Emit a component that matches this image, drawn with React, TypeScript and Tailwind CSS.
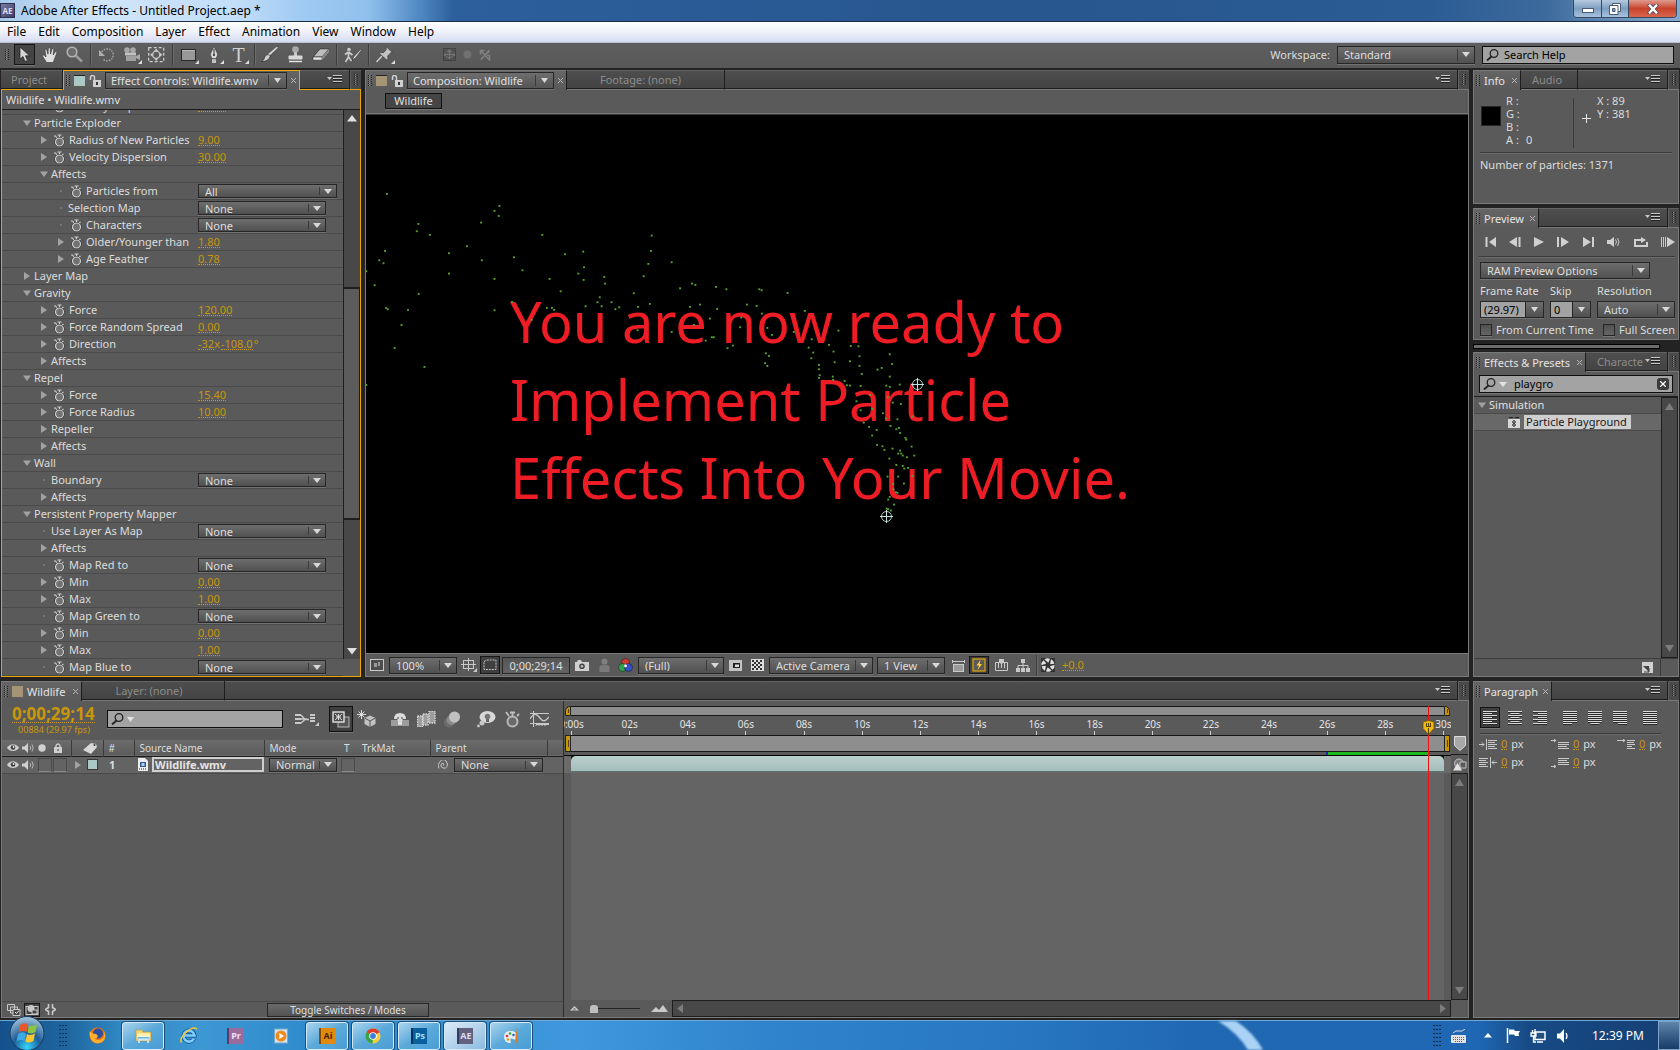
import React from "react";
import clsx from "clsx";

type Kids = { children?: React.ReactNode; className?: string };

/* ---------- drawing helpers ---------- */

function Ico({ w, h, className, children }: { w: number; h: number } & Kids) {
  return (
    <svg width={w} height={h} viewBox={`0 0 ${w} ${h}`} className={clsx("shrink-0", className)} aria-hidden="true">
      {children}
    </svg>
  );
}

const L = "#c9c9c9";

function Grip() {
  return (
    <Ico w={4} h={11}>
      {[0, 2, 4, 6, 8, 10].map((y) => (
        <g key={y} fill="#222">
          <rect x="0" y={y} width="1" height="1" />
          <rect x="3" y={y} width="1" height="1" />
          <rect x="1" y={y} width="1" height="1" fill="#8a8a8a" />
        </g>
      ))}
    </Ico>
  );
}

function Close() {
  return (
    <button aria-label="Close tab" className="flex">
      <Ico w={5} h={5}>
        <path d="M0 0L5 5M5 0L0 5" stroke="#b5b5b5" strokeWidth="1" />
      </Ico>
    </button>
  );
}

function MenuIcon() {
  return (
    <button aria-label="Panel menu" className="flex">
      <Ico w={15} h={9}>
        <path d="M0 2h5L2.5 5z" fill={L} />
        <path d="M6 .5h9M6 3.5h9M6 6.5h9" stroke={L} />
        <path d="M6 1.5h9M6 4.5h9M6 7.5h9" stroke="#222" />
      </Ico>
    </button>
  );
}

function Lock() {
  return (
    <Ico w={12} h={12}>
      <path d="M1.5 5V2.5a2 2 0 0 1 4 0V5" fill="none" stroke="#d0d0d0" strokeWidth="1.5" />
      <rect x="4" y="5" width="8" height="7" fill="#d0d0d0" />
      <rect x="7" y="7" width="2" height="3" fill="#333" />
    </Ico>
  );
}

function Down({ w = 8, fill = "#d8d8d8" }: { w?: number; fill?: string }) {
  return (
    <Ico w={w} h={5}>
      <path d={`M0 0h${w}L${w / 2} 5z`} fill={fill} />
    </Ico>
  );
}

function Loupe({ dark = "#222" }: { dark?: string }) {
  return (
    <Ico w={13} h={12}>
      <circle cx="8" cy="4.5" r="3.8" fill="none" stroke={dark} strokeWidth="1.3" />
      <path d="M5.5 7.5L1 11.5" stroke={dark} strokeWidth="1.8" />
    </Ico>
  );
}

/* ---------- controls ---------- */

function Sel({ value, label, className, pad = "pl-[6px]" }: { value: string; label: string; className?: string; pad?: string }) {
  return (
    <div className={clsx("relative shrink-0", className)}>
      <select
        aria-label={label}
        defaultValue={value}
        className={clsx(
          "block h-full w-full appearance-none border border-[#262626] bg-linear-to-b from-[#6e6e6e] to-[#505050] pr-4 text-[11px] leading-none text-[#dedede] shadow-[0_1px_0_#727272]",
          pad,
        )}
      >
        <option>{value}</option>
      </select>
      <span className="pointer-events-none absolute inset-y-0 right-0 flex w-[18px] items-center justify-center">
        <span className="absolute inset-y-[3px] left-0 w-px bg-[#3a3a3a]" />
        <Down />
      </span>
    </div>
  );
}

function Panel({
  tabs,
  children,
  accent,
  className,
  extra,
}: {
  tabs: React.ReactNode;
  accent?: boolean;
  extra?: React.ReactNode;
} & Kids) {
  const line = accent ? "border-[#eba500]" : "border-[#7a7a7a]";
  return (
    <section className={clsx("flex min-w-0 flex-col", className)}>
      <div className="flex h-[20px] shrink-0">
        {tabs}
        <div className={clsx("flex min-w-0 flex-1 items-center justify-end border-b bg-linear-to-b from-[#4e4e4e] to-[#434343] pr-[7px] shadow-[inset_0_-1px_0_#1d1d1d,inset_0_1px_0_#646464]", line)}>
          {extra}
          <MenuIcon />
        </div>
        <div className={clsx("flex w-[12px] shrink-0 items-center justify-center border-b border-l bg-[#4a4a4a] shadow-[inset_1px_1px_0_#606060]", line, "border-l-[#1d1d1d]")}>
          <Grip />
        </div>
      </div>
      <div className={clsx("flex min-h-0 flex-1 flex-col border-x border-b bg-[#5a5a5a]", line)}>{children}</div>
    </section>
  );
}

function ActiveTab({ children, accent, className }: { accent?: boolean } & Kids) {
  return (
    <div
      className={clsx(
        "flex shrink-0 items-center border-t border-l border-r bg-linear-to-b from-[#656565] to-[#5a5a5a]",
        accent ? "border-[#eba500]" : "border-[#7a7a7a] border-r-[#1d1d1d]",
        className,
      )}
    >
      {children}
    </div>
  );
}

function IdleTab({ children, accent, className }: { accent?: boolean } & Kids) {
  return (
    <button
      className={clsx(
        "flex shrink-0 items-center justify-center overflow-hidden border-r border-b border-r-[#1d1d1d] bg-linear-to-b from-[#4e4e4e] to-[#434343] text-[#8c8c8c] shadow-[inset_0_-1px_0_#1d1d1d,inset_0_1px_0_#646464]",
        accent ? "border-b-[#eba500]" : "border-b-[#7a7a7a]",
        className,
      )}
    >
      {children}
    </button>
  );
}

function TabMenu({ children, className }: Kids) {
  return (
    <button className={clsx("flex h-[17px] items-center border border-[#262626] bg-linear-to-b from-[#6e6e6e] to-[#555] pl-[5px] whitespace-nowrap text-[#e0e0e0] shadow-[0_1px_0_#727272]", className)}>
      <span className="flex-1 text-left">{children}</span>
      <span className="flex h-[11px] w-[18px] items-center justify-center border-l border-[#3a3a3a]">
        <Down w={7} />
      </span>
    </button>
  );
}

/* ---------- title, menu and tool bars ---------- */

function TitleBar() {
  return (
    <header className="flex h-[22px] shrink-0 items-start justify-between border-b border-[#1c2e45] bg-[linear-gradient(90deg,#a6c9ea_0%,#cfe4f8_6%,#c2def8_14%,#9fcaf2_18%,#8fc0ec_22%,#4f88c2_25%,#2c5f9c_27%,#28568e_60%,#2b5c94_85%,#3d6a9d_92%,#84a9cc_100%)]">
      <div className="flex h-full items-center">
        <span className="flex h-[15px] w-[15px] items-center justify-center border border-[#2f2f52] bg-linear-to-br from-[#7a7aa5] to-[#3f3f63] text-[8px] font-bold text-[#dcdcf2]">AE</span>
        <h1 className="pl-[6px] text-[12px] text-black">Adobe After Effects - Untitled Project.aep *</h1>
      </div>
      <div className="mr-[3px] flex h-[18px] overflow-hidden rounded-b-[4px] border border-t-0 border-[#33465e] shadow-[0_0_1px_#dbe8f5]">
        <button aria-label="Minimize" className="flex w-[28px] items-center justify-center border-r border-[#33465e] bg-linear-to-b from-[#b4c9df] via-[#7f9fc1] to-[#a6c2de]">
          <Ico w={12} h={10}><rect x=".5" y="4.5" width="11" height="4" fill="#fff" stroke="#4a5a70" /></Ico>
        </button>
        <button aria-label="Restore" className="flex w-[27px] items-center justify-center border-r border-[#33465e] bg-linear-to-b from-[#b4c9df] via-[#7f9fc1] to-[#a6c2de]">
          <Ico w={12} h={12}>
            <path d="M3.5.5h8v8h-8z" fill="#fff" stroke="#4a5a70" />
            <path d="M.5 2.5h8.5v9H.5z" fill="#fff" stroke="#4a5a70" />
            <path d="M3.5 5.5h2.5v3H3.5z" fill="#8aa7c6" stroke="#4a5a70" />
          </Ico>
        </button>
        <button aria-label="Close" className="flex w-[47px] items-center justify-center bg-linear-to-b from-[#dd9a8e] via-[#c8412b] to-[#d9664e]">
          <Ico w={12} h={10}>
            <path d="M1.5 0L10.5 10M10.5 0L1.5 10" stroke="#4c4c60" strokeWidth="4" />
            <path d="M2 .7L10 9.3M10 .7L2 9.3" stroke="#fff" strokeWidth="2.4" />
          </Ico>
        </button>
      </div>
    </header>
  );
}

function MenuBar() {
  return (
    <nav className="flex h-[21px] shrink-0 items-center gap-3 border-b border-[#b8bfd6] bg-linear-to-b from-white via-[#eef1fa] to-[#d6dcf0] pl-[7px] text-[12px] text-black">
      {["File", "Edit", "Composition", "Layer", "Effect", "Animation", "View", "Window", "Help"].map((m) => (
        <button key={m}>{m}</button>
      ))}
    </nav>
  );
}

function Tool({ label, on, children, more }: { label: string; on?: boolean; more?: boolean; children: React.ReactNode }) {
  return (
    <button
      aria-label={label}
      className={clsx(
        "relative flex h-[21px] items-center justify-center",
        on ? "mx-[2px] w-[21px] border border-[#161616] bg-[#444] shadow-[0_1px_0_#777]" : "w-[25px]",
      )}
    >
      {children}
      {more && (
        <svg width="4" height="4" className="absolute right-[2px] bottom-px"><path d="M4 0V4H0z" fill="#ddd" /></svg>
      )}
    </button>
  );
}

const Rule = () => <span className="mx-[3px] h-[21px] w-px bg-[#3c3c3c] shadow-[1px_0_0_#6c6c6c]" />;

function ToolBar() {
  return (
    <div className="flex h-[25px] shrink-0 items-center bg-linear-to-b from-[#5e5e5e] to-[#585858] pr-[6px] pb-[2px] pl-[5px]">
      <Grip />
      <span className="w-[3px]" />
      <Tool label="Selection" on>
        <Ico w={11} h={15}><path d="M1 0V12L4 9.5L6 14.5L8.5 13.5L6.5 8.8H10.5z" fill="#d5d5d5" stroke="#1d1d1d" strokeWidth=".7" /></Ico>
      </Tool>
      <Tool label="Hand">
        <Ico w={16} h={16}>
          <path d="M4.5 15.5L.8 9.5c-.7-1.3 1-2 1.8-1L4 10 3 3.5c-.2-1.5 1.5-1.6 1.9-.3L6 7.2 6.3 1.7c.1-1.4 1.9-1.4 2 0L8.6 7 9.9 2.3c.4-1.3 2-.9 1.9.4L11.2 8l1.9-3c.7-1 2.1-.3 1.7.9l-2.7 7.1-.8 2.5z" fill="#dedede" stroke="#333" strokeWidth=".6" />
        </Ico>
      </Tool>
      <Tool label="Zoom">
        <Ico w={17} h={17}>
          <path d="M9 9L16 15.5" stroke="#9a9a9a" strokeWidth="2.6" />
          <circle cx="6" cy="6" r="4.8" fill="#6e6e6e" stroke="#b4b4b4" strokeWidth="1.6" />
        </Ico>
      </Tool>
      <Rule />
      <Tool label="Rotation">
        <Ico w={16} h={16}>
          <path d="M3 5a6 6 0 1 1 1.5 7.5" fill="none" stroke="#a5a5a5" strokeWidth="1.5" strokeDasharray="1.5 1.2" />
          <path d="M0 3v6h6z" fill="#b0b0b0" />
        </Ico>
      </Tool>
      <Tool label="Camera" more>
        <Ico w={18} h={15}>
          <circle cx="4" cy="3" r="2.8" fill="#a8a8a8" /><circle cx="10" cy="3" r="2.8" fill="#a8a8a8" />
          <rect x="2" y="5.5" width="11" height="3" fill="#c4c4c4" /><rect x="3" y="9" width="10" height="5" fill="#a0a0a0" />
          <path d="M13 9L17 7V13L13 11z" fill="#a8a8a8" />
        </Ico>
      </Tool>
      <Tool label="Pan Behind">
        <Ico w={17} h={16}>
          <path d="M.7 .7h15v14h-15z" fill="none" stroke={L} strokeWidth="1.3" strokeDasharray="3 2" />
          <circle cx="8.2" cy="7.7" r="3.6" fill="none" stroke={L} strokeWidth="1.3" />
          <path d="M8.2 1.5l2 2.5h-4zM8.2 14l2-2.5h-4zM2 7.7l2.500-2v4zM14.5 7.7l-2.5-2v4z" fill={L} />
        </Ico>
      </Tool>
      <Rule />
      <Tool label="Rectangle" more>
        <Ico w={15} h={12}><rect x=".5" y=".5" width="14" height="11" fill="#989898" stroke="#262626" /><path d="M1 1.5h13" stroke="#bbb" /></Ico>
      </Tool>
      <Tool label="Pen" more>
        <Ico w={12} h={17}>
          <path d="M6 0C7 4 9.5 6 9.5 9L8 12.5H4L2.5 9C2.5 6 5 4 6 0z" fill="#d8d8d8" stroke="#333" strokeWidth=".5" />
          <path d="M6 3V8.5" stroke="#333" /><circle cx="6" cy="9" r="1.1" fill="#333" /><path d="M4 13.2h4V17H4z" fill="#c4c4c4" />
        </Ico>
      </Tool>
      <Tool label="Type" more>
        <span className="font-['Liberation_Serif',serif] text-[20px] leading-none text-[#d0d0d0]">T</span>
      </Tool>
      <Rule />
      <Tool label="Brush">
        <Ico w={17} h={16}>
          <path d="M16 .5L7 9l-1.3-1.5L14.5 0z" fill="#d8d8d8" /><path d="M6.5 7.8c1.5 0 2.3 1.8.8 3.5C5.5 13.5 3 14.5 0 14.5c2-1.5 2-3 3-5 .8-1.4 2-2 3.5-1.7z" fill="#cfcfcf" stroke="#222" strokeWidth=".6" />
        </Ico>
      </Tool>
      <Tool label="Clone Stamp">
        <Ico w={15} h={17}>
          <circle cx="7.5" cy="3.5" r="3.3" fill="#a8a8a8" /><path d="M6.3 6h2.4l.6 4H5.7z" fill="#c8c8c8" /><rect x=".5" y="9.5" width="14" height="4" rx="1" fill="#d8d8d8" /><path d="M1 15.5h13" stroke="#e2e2e2" strokeWidth="1.5" />
        </Ico>
      </Tool>
      <Tool label="Eraser">
        <Ico w={18} h={13}>
          <path d="M8 .8H17L10 9H1z" fill="#bdbdbd" stroke="#222" strokeWidth=".7" /><path d="M1 9H10V12.2H1z" fill="#e4e4e4" stroke="#333" strokeWidth=".6" /><path d="M10 9L17 .8V4L10 12.2z" fill="#8a8a8a" />
        </Ico>
      </Tool>
      <Rule />
      <Tool label="Roto Brush">
        <Ico w={18} h={16}>
          <circle cx="5" cy="2.5" r="1.8" fill={L} /><path d="M4.5 5L1 7.5M4.5 5l4 3M4.5 5v5l-3 5M4.5 10l3 4" stroke={L} strokeWidth="1.7" fill="none" />
          <path d="M17 2L10 9.5 8 13l3.5-2L17.5 3z" fill="#dedede" stroke="#222" strokeWidth=".5" />
        </Ico>
      </Tool>
      <Rule />
      <Tool label="Puppet Pin" more>
        <Ico w={17} h={17}>
          <path d="M.5 16L6 10" stroke="#cfcfcf" strokeWidth="1.4" />
          <path d="M10 .5L16.5 6.5l-1.8.3-3 3.2.3 3.3L10.8 14 3.5 7.5l.8-1 3.2.2 2.8-3.2z" fill="#c2c2c2" stroke="#333" strokeWidth=".6" />
        </Ico>
      </Tool>
      <div className="ml-[46px] flex items-center gap-[7px] opacity-60">
        <Ico w={13} h={13}><rect x=".5" y=".5" width="12" height="12" fill="#4c4c4c" stroke="#333" /><path d="M6.5 2v9M6.5 1.5L4.5 4h4zM3 6.5h7M2 6c1 5 8 5 9 0M1.5 8l.5-2.5L4 7M11.5 8L11 5.5 9 7" stroke="#8a8a8a" fill="none" /></Ico>
        <Ico w={9} h={9}><circle cx="4.5" cy="4.5" r="4" fill="#808080" /></Ico>
        <Ico w={12} h={12}><path d="M1 1.5h4.5M1.5 1v4.5M1.5 1.5l6 6M10.5 1L3 9.5M2 11l1.5-3M8 6.5h2.5V11L7 7.5M9.5 2v2" stroke="#999" strokeWidth="1.5" fill="none" /></Ico>
      </div>
      <div className="flex-1" />
      <span className="mr-[7px] text-[#dcdcdc]">Workspace:</span>
      <Sel value="Standard" label="Workspace" className="h-[18px] w-[138px]" />
      <label className="ml-[7px] flex h-[18px] w-[192px] items-center gap-[5px] border border-[#0e0e0e] bg-[#a3a3a3] px-[3px] shadow-[0_1px_0_#777]">
        <Loupe />
        <input aria-label="Search Help" defaultValue="Search Help" className="min-w-0 flex-1 bg-transparent text-[11px] text-black outline-none" />
      </label>
    </div>
  );
}

/* ---------- effect controls ---------- */

type Row = { d: 1 | 2 | 3; a: "open" | "shut" | "dot"; w?: boolean; t: string; v?: string; s?: string };

const ROWS: Row[] = [
  { d: 2, a: "shut", w: true, t: "Velocity Dispersion", v: "30.00" },
  { d: 1, a: "open", t: "Particle Exploder" },
  { d: 2, a: "shut", w: true, t: "Radius of New Particles", v: "9.00" },
  { d: 2, a: "shut", w: true, t: "Velocity Dispersion", v: "30.00" },
  { d: 2, a: "open", t: "Affects" },
  { d: 3, a: "dot", w: true, t: "Particles from", s: "All" },
  { d: 3, a: "dot", t: "Selection Map", s: "None" },
  { d: 3, a: "dot", w: true, t: "Characters", s: "None" },
  { d: 3, a: "shut", w: true, t: "Older/Younger than", v: "1.80" },
  { d: 3, a: "shut", w: true, t: "Age Feather", v: "0.78" },
  { d: 1, a: "shut", t: "Layer Map" },
  { d: 1, a: "open", t: "Gravity" },
  { d: 2, a: "shut", w: true, t: "Force", v: "120.00" },
  { d: 2, a: "shut", w: true, t: "Force Random Spread", v: "0.00" },
  { d: 2, a: "shut", w: true, t: "Direction", v: "-32x-108.0" },
  { d: 2, a: "shut", t: "Affects" },
  { d: 1, a: "open", t: "Repel" },
  { d: 2, a: "shut", w: true, t: "Force", v: "15.40" },
  { d: 2, a: "shut", w: true, t: "Force Radius", v: "10.00" },
  { d: 2, a: "shut", t: "Repeller" },
  { d: 2, a: "shut", t: "Affects" },
  { d: 1, a: "open", t: "Wall" },
  { d: 2, a: "dot", t: "Boundary", s: "None" },
  { d: 2, a: "shut", t: "Affects" },
  { d: 1, a: "open", t: "Persistent Property Mapper" },
  { d: 2, a: "dot", t: "Use Layer As Map", s: "None" },
  { d: 2, a: "shut", t: "Affects" },
  { d: 2, a: "dot", w: true, t: "Map Red to", s: "None" },
  { d: 2, a: "shut", w: true, t: "Min", v: "0.00" },
  { d: 2, a: "shut", w: true, t: "Max", v: "1.00" },
  { d: 2, a: "dot", w: true, t: "Map Green to", s: "None" },
  { d: 2, a: "shut", w: true, t: "Min", v: "0.00" },
  { d: 2, a: "shut", w: true, t: "Max", v: "1.00" },
  { d: 2, a: "dot", w: true, t: "Map Blue to", s: "None" },
];

function Twirl({ a }: { a: Row["a"] }) {
  return (
    <Ico w={8} h={8}>
      {a === "open" && <path d="M0 1.5h8L4 7z" fill="#a2a2a2" />}
      {a === "shut" && <path d="M1 0L7 4 1 8z" fill="#a2a2a2" />}
      {a === "dot" && <rect x="3" y="3" width="2" height="2" fill="#747474" />}
    </Ico>
  );
}

function Watch() {
  return (
    <Ico w={12} h={13}>
      <path d="M1 2h1.500l1.500 2M4.500 1h4M6.500 1v3M9 4l1.500-1" fill="none" stroke="#cfcfcf" strokeWidth="1.2" />
      <circle cx="6.500" cy="8" r="4" fill="#6b6b6b" stroke="#2a2a2a" strokeWidth="2" />
      <circle cx="6.500" cy="8" r="4" fill="#727272" stroke="#cfcfcf" strokeWidth="1.2" />
    </Ico>
  );
}

function Hot({ children, className }: Kids) {
  return <button className={clsx("border-b border-dotted border-[#c8960a] leading-[11px] text-[#c8960a]", className)}>{children}</button>;
}

function EffectControls() {
  return (
    <Panel
      accent
      className="w-[360px] shrink-0"
      tabs={
        <>
          <IdleTab accent className="w-[62px] pr-[5px]">Project</IdleTab>
          <ActiveTab accent className="w-[237px] gap-[4px] pl-[2px]">
            <Grip />
            <span className="h-[11px] w-[11px] border-t border-[#222] bg-[#a9c8c6]" />
            <Lock />
            <TabMenu className="w-[182px]">Effect Controls: Wildlife.wmv</TabMenu>
            <Close />
          </ActiveTab>
        </>
      }
    >
      <div className="h-[20px] shrink-0 border-b border-[#1d1d1d] pl-[4px] leading-[20px] text-[#e0e0e0]">Wildlife • Wildlife.wmv</div>
      <div className="flex min-h-0 flex-1">
        <div className="flex min-w-0 flex-1 flex-col justify-end overflow-hidden">
          {ROWS.map((r, i) => (
            <div key={i} className="flex h-[17px] shrink-0 items-center border-b border-[#4a4a4a]">
              <div className={clsx("flex w-[196px] shrink-0 items-center text-[#dcdcdc]", r.d === 1 ? "pl-[21px]" : r.d === 2 ? "pl-[38px]" : "pl-[55px]")}>
                <button aria-label={`Toggle ${r.t}`} className="mr-[3px] flex"><Twirl a={r.a} /></button>
                {r.w && <span className="mr-[4px] ml-[2px]"><Watch /></span>}
                <span className="whitespace-nowrap">{r.t}</span>
              </div>
              {r.s && <Sel value={r.s} label={r.t} className={clsx("h-[14px]", r.s === "All" ? "w-[139px]" : "w-[128px]")} />}
              {r.v && r.t !== "Direction" && <Hot>{r.v}</Hot>}
              {r.t === "Direction" && (
                <span className="flex text-[#c8960a]">
                  <Hot>-32</Hot><span className="leading-[11px]">x</span><Hot className="ml-px">-108.0</Hot><span className="ml-px leading-[11px]">°</span>
                </span>
              )}
            </div>
          ))}
        </div>
        <div className="flex w-[17px] shrink-0 flex-col pb-[17px]">
          <div className="flex flex-1 flex-col items-center border-l border-[#1d1d1d] bg-[#484848]">
            <Ico w={10} h={7} className="mt-[5px]"><path d="M0 6.5h10L5 0z" fill="#e0e0e0" /></Ico>
            <div className="mt-[165px] h-[233px] w-full border-y-2 border-r border-[#1d1d1d] bg-[#5c5c5c]" />
            <div className="flex-1" />
            <Ico w={10} h={7} className="mb-[4px]"><path d="M0 0h10L5 6.5z" fill="#e0e0e0" /></Ico>
          </div>
        </div>
      </div>
    </Panel>
  );
}

/* ---------- composition viewer ---------- */

const PARTICLES: [number, number][] = [
  [60, 42], [354, 78], [341, 93], [352, 108], [306, 128], [142, 132], [138, 154], [172, 165], [466, 165], [752, 167], [269, 199],
  [55, 213], [222, 220], [392, 232], [525, 223], [573, 215], [750, 213], [40, 241], [51, 250], [308, 241], [804, 247], [743, 252],
  [6, 274], [222, 281], [414, 271], [575, 262], [560, 281], [28, 316], [341, 297], [485, 297], [574, 300], [628, 291], [731, 289],
  [630, 311], [514, 334], [705, 340], [143, 342], [826, 325], [857, 311], [866, 315], [920, 321], [947, 328], [1033, 328], [1039, 331],
  [1107, 339], [616, 352], [58, 384], [62, 388], [115, 390], [341, 391], [387, 366], [478, 384], [491, 384], [497, 390], [579, 379],
  [610, 367], [621, 379], [647, 367], [657, 388], [667, 382], [716, 381], [747, 372], [852, 381], [878, 374], [923, 387], [1001, 374],
  [1026, 378], [1152, 393], [98, 435], [80, 504], [158, 561], [6, 615], [438, 420], [904, 416], [862, 435], [804, 456], [715, 451],
  [893, 482], [909, 472], [914, 472], [950, 505], [964, 497], [983, 442], [986, 413], [1040, 401], [1054, 444], [1066, 465], [1123, 456],
  [1050, 520], [1058, 528], [1048, 550], [1054, 558], [1162, 503], [1174, 518], [1169, 535], [1189, 555], [1189, 568], [1191, 586],
  [1189, 594], [1170, 478], [1215, 495], [1227, 515], [1230, 547], [1240, 452], [1272, 498], [1292, 499], [1295, 529], [1270, 544],
  [1295, 558], [1301, 582], [1374, 523], [1380, 552], [1342, 569], [1353, 564], [1374, 590], [1225, 590], [1226, 600], [1256, 603],
  [1262, 616], [1270, 617], [1298, 618], [1365, 617], [1374, 621], [1400, 614], [1323, 645], [1287, 664], [1298, 691], [1329, 687],
  [1306, 728], [1320, 741], [1340, 750], [1328, 767], [1341, 795], [1355, 799], [1360, 810], [1369, 652], [1382, 668], [1403, 672],
  [1356, 700], [1364, 716], [1394, 718], [1433, 710], [1376, 738], [1391, 748], [1398, 744], [1401, 759], [1415, 774], [1417, 779],
  [1431, 800], [1381, 806], [1401, 812], [1396, 821], [1404, 821], [1408, 827], [1419, 832], [1438, 827], [1373, 836], [1391, 855],
  [1408, 858], [1412, 866], [1422, 864], [1396, 890], [1368, 890], [1433, 888], [1411, 911], [1383, 913], [1384, 928], [1390, 937],
  [1394, 939], [1374, 951], [1370, 959], [1385, 974], [1366, 986], [1370, 988], [1377, 992],
];

function Target({ className }: { className?: string }) {
  return (
    <svg width="13" height="13" className={clsx("absolute", className)} aria-hidden="true">
      <circle cx="6.5" cy="6.5" r="5" fill="none" stroke="#a9d0cc" />
      <path d="M6.5 0v13M0 6.5h13" stroke="#c4e2df" />
    </svg>
  );
}

function Viewer() {
  return (
    <div className="relative min-h-0 flex-1 overflow-hidden bg-black">
      <p className="absolute top-[167px] left-[144px] font-['Noto_Sans',sans-serif] text-[56px] leading-[78px] whitespace-nowrap text-[#ee1c24]">
        You are now ready to
        <br />
        Implement Particle
        <br />
        Effects Into Your Movie.
      </p>
      <svg width="600" height="350" viewBox="0 0 1568 1050" preserveAspectRatio="none" className="absolute top-[65px] left-[-2px]" aria-hidden="true">
        {PARTICLES.map(([x, y], i) => (
          <rect key={i} x={x - 2.5} y={y - 3} width="5" height="5.5" fill="#55a52f" />
        ))}
      </svg>
      <Target className="top-[263px] left-[545px]" />
      <Target className="top-[395px] left-[514px]" />
    </div>
  );
}

function IconBtn({ label, on, children, className }: { label: string; on?: boolean } & Kids) {
  return (
    <button
      aria-label={label}
      className={clsx("flex h-[18px] shrink-0 items-center justify-center", on && "border border-[#161616] bg-[#3f3f3f] shadow-[0_1px_0_#777]", className)}
    >
      {children}
    </button>
  );
}

function Composition() {
  return (
    <Panel
      className="flex-1"
      tabs={
        <>
          <ActiveTab className="w-[202px] gap-[4px] pl-[2px]">
            <Grip />
            <span className="h-[11px] w-[11px] border-t border-[#222] bg-[#a59577]" />
            <Lock />
            <TabMenu className="w-[147px]">Composition: Wildlife</TabMenu>
            <Close />
          </ActiveTab>
          <IdleTab className="w-[158px] pr-[10px]">Footage: (none)</IdleTab>
        </>
      }
    >
      <div className="h-[25px] shrink-0 border-b border-[#3a3a3a] pt-[3px] pl-[19px] shadow-[inset_0_-1px_0_#777]">
        <button className="block h-[16px] w-[57px] border border-[#111] bg-[#454545] leading-[14px] text-[#e0e0e0] shadow-[0_1px_0_#777]">Wildlife</button>
      </div>
      <Viewer />
      <div className="flex h-[23px] shrink-0 items-center border-t border-[#7a7a7a] pl-[3px]">
        <IconBtn label="Always preview" className="w-[16px]">
          <Ico w={14} h={12}><rect x=".5" y=".5" width="13" height="11" fill="#4c4c4c" stroke={L} /><path d="M4 4h3v4H4zM8 3h2v4H8z" fill="#999" /></Ico>
        </IconBtn>
        <Sel value="100%" label="Magnification" className="ml-[4px] h-[17px] w-[68px]" />
        <IconBtn label="Grid and guides" className="ml-[2px] w-[20px]">
          <Ico w={16} h={14}><rect x="2.5" y="2.5" width="10" height="8" fill="none" stroke={L} /><path d="M7.5 0v13M0 6.5h15" stroke={L} /><path d="M16 10v4h-4z" fill={L} /></Ico>
        </IconBtn>
        <IconBtn label="Region of interest" on className="ml-px w-[20px]">
          <Ico w={14} h={12}><path d="M1 2.5L4 1h9v9.5H1z" fill="none" stroke={L} strokeDasharray="2 1" /></Ico>
        </IconBtn>
        <button className="ml-[2px] h-[17px] w-[68px] border border-[#262626] bg-linear-to-b from-[#555] to-[#646464] leading-[15px] text-[#dedede] shadow-[0_1px_0_#727272]">0;00;29;14</button>
        <IconBtn label="Snapshot" className="ml-[3px] w-[18px]">
          <Ico w={14} h={12}><path d="M0 3h2l1-2h3l1 2h7v9H0z" fill="#cfcfcf" /><circle cx="7" cy="7.3" r="2.8" fill="#444" /><circle cx="7" cy="7.3" r="1.3" fill="#bbb" /></Ico>
        </IconBtn>
        <IconBtn label="Show snapshot" className="ml-[4px] w-[18px]">
          <Ico w={11} h={14}><circle cx="5.5" cy="3.5" r="3" fill="#808080" /><path d="M.5 14V9c0-3 10-3 10 0v5z" fill="#7a7a7a" /></Ico>
        </IconBtn>
        <IconBtn label="Channels" className="ml-[2px] w-[22px]">
          <Ico w={16} h={15}><circle cx="7.5" cy="4.5" r="4" fill="#d13b30" stroke="#222" strokeWidth=".6" /><circle cx="4.5" cy="9.5" r="4" fill="#2ea44a" stroke="#222" strokeWidth=".6" /><circle cx="10.5" cy="9.5" r="4" fill="#3550c8" stroke="#222" strokeWidth=".6" /><circle cx="7.5" cy="7.8" r="1.5" fill="#eee" /></Ico>
        </IconBtn>
        <Sel value="(Full)" label="Resolution" className="ml-px h-[17px] w-[86px]" />
        <IconBtn label="Region" className="ml-[2px] w-[18px]"><Ico w={13} h={11}><rect width="13" height="11" fill="#c4c4c4" /><rect x="4" y="3" width="7" height="5" fill="#222" /><rect x="6" y="4.5" width="4" height="2.5" fill="#ddd" /></Ico></IconBtn>
        <IconBtn label="Transparency grid" className="ml-[4px] w-[18px]">
          <Ico w={13} h={12}>
            <rect width="13" height="12" fill="#ddd" />
            {[1, 3, 5, 7, 9].map((y, j) => (j % 2 ? [3, 7] : [1, 5, 9]).map((x) => <rect key={`${x}-${y}`} x={x} y={y} width="2" height="2" fill="#333" />))}
          </Ico>
        </IconBtn>
        <Sel value="Active Camera" label="3D view" className="ml-[3px] h-[17px] w-[104px]" />
        <Sel value="1 View" label="View layout" className="ml-[4px] h-[17px] w-[68px]" />
        <IconBtn label="Pixel aspect" className="ml-[4px] w-[18px]"><Ico w={13} h={13}><path d="M.5 1v3M12.5 1v3M1 2.5h11" stroke={L} /><rect x="1.5" y="5.5" width="10" height="7" fill="#9a9a9a" stroke={L} /></Ico></IconBtn>
        <IconBtn label="Fast previews" on className="ml-[2px] w-[20px]"><Ico w={15} h={14}><rect x="1" y="1" width="12" height="12" fill="#5a5a5a" stroke="#d9a010" strokeWidth="1.3" /><path d="M8.5 2L4.5 7.5H7L5.5 12 10 6H7.5z" fill="#ffd23a" /></Ico></IconBtn>
        <IconBtn label="Timeline" className="ml-[2px] w-[20px]"><Ico w={13} h={12}><path d="M.5 3.5h12v8H.5zM3.5 4v5M6.5 3v6M9.5 4v5" fill="none" stroke={L} /><path d="M4 0h5v3L6.5 5.5 4 3z" fill={L} /></Ico></IconBtn>
        <IconBtn label="Flowchart" className="ml-[2px] w-[20px]"><Ico w={14} h={13}><path d="M5 0h4v4H5zM0 9h4v4H0zM5 9h4v4H5zM10 9h4v4h-4z" fill={L} /><path d="M7 4v5M2 9V6.5h10V9" fill="none" stroke={L} /></Ico></IconBtn>
        <Rule />
        <IconBtn label="Reset exposure" className="w-[16px]">
          <Ico w={14} h={14}>
            <rect width="14" height="14" fill="#333" />
            {[0, 60, 120, 180, 240, 300].map((a) => <path key={a} transform={`rotate(${a} 7 7)`} d="M7 4.5L3.5 1.5Q6-.5 9 .8L7.5 4.5z" fill="#e2e2e2" />)}
          </Ico>
        </IconBtn>
        <Hot className="ml-[6px]">+0.0</Hot>
      </div>
    </Panel>
  );
}

/* ---------- right-hand panels ---------- */

function SideTab({ children, className }: Kids) {
  return (
    <ActiveTab className={clsx("gap-[4px] pl-[2px] whitespace-nowrap text-[#e4e4e4]", className)}>
      <Grip />
      <span className="flex-1">{children}</span>
      <span className="pr-[3px]"><Close /></span>
    </ActiveTab>
  );
}

const HR = () => <div className="h-[2px] shrink-0 border-t border-[#3a3a3a] bg-[#6c6c6c]" />;

function Info() {
  return (
    <Panel className="h-[134px] shrink-0" tabs={<><SideTab className="w-[48px]">Info</SideTab><IdleTab className="w-[57px] pr-[4px]">Audio</IdleTab></>}>
      <div className="px-[6px] pt-[4px]">
        <div className="flex h-[58px] text-[#dcdcdc]">
          <span className="mt-[12px] ml-px h-[20px] w-[20px] border border-[#262626] bg-black" />
          <dl className="ml-[5px] grid w-[62px] grid-cols-[20px_auto] content-start leading-[13px]">
            {["R :", "G :", "B :"].map((c) => (
              <React.Fragment key={c}><dt>{c}</dt><dd /></React.Fragment>
            ))}
            <dt>A :</dt><dd>0</dd>
          </dl>
          <span className="mt-[4px] ml-[5px] h-[50px] w-px bg-[#3a3a3a]" />
          <Ico w={9} h={9} className="mt-[20px] ml-[8px]"><path d="M4.5 0v9M0 4.5h9" stroke="#e4e4e4" /></Ico>
          <div className="ml-[6px] leading-[13px]"><div>X : 89</div><div>Y : 381</div></div>
        </div>
        <HR />
        <div className="pt-[4px] leading-[14px] text-[#dcdcdc]">Number of particles: 1371</div>
      </div>
    </Panel>
  );
}

function Check({ label, className }: { label: string; className?: string }) {
  return (
    <label className={clsx("flex items-center gap-[4px] whitespace-nowrap", className)}>
      <input type="checkbox" className="h-[12px] w-[12px] appearance-none border border-[#262626] bg-linear-to-b from-[#505050] to-[#666] shadow-[0_1px_0_#777]" />
      {label}
    </label>
  );
}

function Combo({ value, label, className }: { value: string; label: string; className: string }) {
  return (
    <div className={clsx("flex h-[17px] border border-[#262626] bg-linear-to-b from-[#6e6e6e] to-[#505050] shadow-[0_1px_0_#727272]", className)}>
      <input aria-label={label} defaultValue={value} className="min-w-0 flex-1 border-r border-[#262626] bg-[#a3a3a3] pl-[3px] text-[11px] text-black outline-none" />
      <button aria-label={`${label} choices`} className="flex w-[17px] items-center justify-center"><Down w={7} /></button>
    </div>
  );
}

function Preview() {
  const icons: [string, number, React.ReactNode][] = [
    ["First frame", 11, <path d="M.5 0h2v10h-2zM11 0v10L4 5z" />],
    ["Previous frame", 12, <path d="M9.5 0h2v10h-2zM8 0v10L0 5z" />],
    ["Play", 10, <path d="M0 0L10 5 0 10z" />],
    ["Next frame", 12, <path d="M0 0h2v10H0zM4 0v10L12 5z" />],
    ["Last frame", 11, <path d="M9 0h2v10H9zM0 0v10L8 5z" />],
    ["Mute audio", 14, <><path d="M0 3h3l4-3v10L3 7H0z" /><path d="M8.5 2.5q2 2.5 0 5M10.5 1q3 4 0 8" fill="none" stroke={L} /></>],
    ["Loop", 14, <path d="M0 2h7V0l5 3-5 3V4H2v4h10V5h2v5H0z" />],
    ["RAM preview", 14, <><path d="M.5 0v10M2.5 0v10M4.5 0v10" stroke={L} fill="none" /><path d="M6 0l8 5-8 5z" /></>],
  ];
  return (
    <Panel className="h-[132px] shrink-0" tabs={<SideTab className="w-[66px]">Preview</SideTab>}>
      <div className="flex flex-col pr-[3px] pl-[5px] text-[#dcdcdc]">
        <div className="flex h-[28px] items-center justify-between pl-[6px]">
          {icons.map(([l, w, p]) => (
            <button key={l} aria-label={l} className="flex"><Ico w={w} h={10}><g fill="#d0d0d0">{p}</g></Ico></button>
          ))}
        </div>
        <HR />
        <Sel value="RAM Preview Options" label="Preview mode" className="mt-[4px] ml-px h-[17px] w-[170px]" />
        <div className="mt-[5px] flex justify-between pl-px">
          <div><div className="mb-[3px] leading-[14px]">Frame Rate</div><Combo value="(29.97)" label="Frame Rate" className="w-[64px]" /></div>
          <div><div className="mb-[3px] leading-[14px]">Skip</div><Combo value="0" label="Skip" className="w-[41px]" /></div>
          <div><div className="mb-[3px] leading-[14px]">Resolution</div><Sel value="Auto" label="Preview resolution" className="h-[17px] w-[78px]" /></div>
        </div>
        <div className="mt-[5px] flex justify-between pl-px leading-[14px]"><Check label="From Current Time" /><Check label="Full Screen" /></div>
      </div>
    </Panel>
  );
}

function ScrollV({ className }: { className?: string }) {
  return (
    <div className={clsx("flex flex-col items-center justify-between border border-[#1d1d1d] bg-[#484848] py-[5px]", className)}>
      <Ico w={9} h={7}><path d="M0 7h9L4.5 0z" fill="#7c7c7c" /></Ico>
      <Ico w={9} h={7}><path d="M0 0h9L4.5 7z" fill="#7c7c7c" /></Ico>
    </div>
  );
}

function Effects() {
  return (
    <Panel className="min-h-0 flex-1" extra={<span className="min-w-0 flex-1 overflow-hidden pl-[11px] whitespace-nowrap text-[#8c8c8c]">Characte</span>} tabs={<SideTab className="w-[113px]">Effects &amp; Presets</SideTab>}>
      <div className="mx-[5px] mt-[3px] flex h-[18px] shrink-0 items-center gap-[3px] border border-[#0e0e0e] bg-[#a3a3a3] px-[3px] shadow-[0_1px_0_#777]">
        <Loupe />
        <Down fill="#e2e2e2" />
        <input aria-label="Search effects" defaultValue="playgro" className="ml-[4px] min-w-0 flex-1 bg-transparent text-[11px] text-black outline-none" />
        <button aria-label="Clear search" className="flex h-[12px] w-[12px] items-center justify-center rounded-[3px] bg-[#3a3a3a]">
          <Ico w={6} h={6}><path d="M0 0L6 6M6 0L0 6" stroke="#fff" strokeWidth="1.3" /></Ico>
        </button>
      </div>
      <div className="mt-[3px] flex min-h-0 flex-1 border-t border-[#1d1d1d]">
        <div className="flex min-w-0 flex-1 flex-col text-[#e0e0e0]">
          <div className="flex h-[17px] items-center gap-[3px] border-b border-[#4a4a4a] pl-[4px]"><Twirl a="open" />Simulation</div>
          <div className="flex h-[17px] items-center gap-[4px] border-b border-[#4a4a4a] bg-[#686868] pl-[34px]">
            <Ico w={12} h={11}><path d="M0 2h12v9H0z" fill="#d8d8d8" /><path d="M1 .5h4M7 .5h4" stroke="#222" /><circle cx="6" cy="5" r="1.3" fill="none" stroke="#222" /><circle cx="6" cy="8" r="1.3" fill="none" stroke="#222" /></Ico>
            <span className="h-[14px] w-[107px] bg-[#cfcfcf] pl-[2px] leading-[14px] whitespace-nowrap text-[#1a1a1a]">Particle Playground</span>
          </div>
        </div>
        <ScrollV className="w-[17px]" />
      </div>
      <div className="flex h-[18px] shrink-0 items-center justify-end border-t border-[#3c3c3c]">
        <button aria-label="New preset" className="mr-[7px] flex"><Ico w={11} h={11}><rect width="11" height="11" fill="#d0d0d0" /><path d="M1 4h6v6z" fill="#444" /><path d="M7 6v4H2" stroke="#444" fill="none" /></Ico></button>
        <span className="h-full w-[18px] border-l border-[#3c3c3c]" />
      </div>
    </Panel>
  );
}

function Align({ kind }: { kind: "l" | "c" | "r" | "jl" | "jc" | "jr" | "j" }) {
  const narrow = kind === "j" ? [] : kind[0] === "j" ? [12] : [2, 6, 10];
  const wide = [0, 2, 4, 6, 8, 10, 12];
  const end = kind.slice(-1);
  return (
    <Ico w={14} h={14}>
      {wide.map((y) => {
        const n = narrow.includes(y);
        const w = n ? 9 : 14;
        const x = !n ? 0 : end === "l" ? 0 : end === "r" ? 5 : 2.5;
        return <g key={y}><rect x={x} y={y} width={w} height="1" fill="#d8d8d8" /><rect x={x} y={y + 1} width={w} height="1" fill="#2a2a2a" /></g>;
      })}
    </Ico>
  );
}

function Indent({ d }: { d: string }) {
  return <Ico w={18} h={11}><path d={d} stroke={L} fill="none" /></Ico>;
}

function Paragraph() {
  const px = (d: string) => (
    <div className="flex items-center gap-[4px]"><Indent d={d} /><Hot>0</Hot><span>px</span></div>
  );
  return (
    <Panel className="h-[337px] shrink-0" tabs={<SideTab className="w-[79px]">Paragraph</SideTab>}>
      <div className="flex h-[32px] items-center pt-px pl-[6px]">
        <IconBtn label="Align left" on className="h-[21px] w-[20px]"><Align kind="l" /></IconBtn>
        <IconBtn label="Align center" className="ml-[5px] w-[20px]"><Align kind="c" /></IconBtn>
        <IconBtn label="Align right" className="ml-[5px] w-[20px]"><Align kind="r" /></IconBtn>
        <IconBtn label="Justify last left" className="ml-[10px] w-[20px]"><Align kind="jl" /></IconBtn>
        <IconBtn label="Justify last center" className="ml-[5px] w-[20px]"><Align kind="jc" /></IconBtn>
        <IconBtn label="Justify last right" className="ml-[5px] w-[20px]"><Align kind="jr" /></IconBtn>
        <IconBtn label="Justify all" className="ml-[10px] w-[20px]"><Align kind="j" /></IconBtn>
      </div>
      <div className="mr-[17px] ml-[6px]"><HR /></div>
      <div className="mx-[5px] mt-[2px] grid grid-cols-[72px_66px_60px] gap-y-[4px] text-[#dcdcdc]">
        {px("M0 5.5h5M3 3.5l2 2-2 2M7.5 0v11M9 1.5h9M9 3.5h7M9 5.5h9M9 7.5h7M9 9.5h9")}
        {px("M0 1.5h5M3 0l2 1.5L3 3M7 3.5h11M7 5.5h11M7 7.5h9M7 9.5h11")}
        {px("M0 1.5h8M6 0l2 1.5L6 3M10 1.5h8M10 3.5h7M10 5.5h8M10 7.5h5M10 9.5h8")}
        {px("M0 1.5h9M0 3.5h7M0 5.5h9M0 7.5h7M0 9.5h9M11.5 0v11M18 5.5h-5M15 3.5l-2 2 2 2")}
        {px("M7 1.5h11M7 3.5h9M7 5.5h11M7 7.5h11M0 9.5h5M3 8l2 1.5L3 11")}
      </div>
    </Panel>
  );
}

/* ---------- timeline ---------- */

const Eye = () => <Ico w={12} h={9}><path d="M0 5c3-5 9-5 12 0-3 4-9 4-12 0z" fill="#d0d0d0" /><circle cx="6" cy="4.5" r="2.3" fill="#3a3a3a" /><circle cx="6.5" cy="4" r=".9" fill="#eee" /></Ico>;
const Speaker = () => <Ico w={13} h={10}><path d="M0 3.5h2.5L6 0v10L2.5 6.5H0z" fill="#d0d0d0" /><path d="M8 3q1.5 2 0 4M10 1.5q2.5 3.5 0 7" fill="none" stroke="#b8b8b8" /></Ico>;

function TL({ label, children, on, className }: { label: string; on?: boolean } & Kids) {
  return (
    <button aria-label={label} className={clsx("flex h-[26px] shrink-0 items-center justify-center", on && "border border-[#111] bg-[#3f3f3f] shadow-[0_1px_0_#777]", className)}>
      {children}
    </button>
  );
}

function LayerList() {
  const th = "border-l border-[#3a3a3a] pl-[5px] text-left font-normal whitespace-nowrap";
  return (
    <div className="flex w-[561px] shrink-0 flex-col">
      <div className="flex h-[39px] shrink-0 items-start pt-[5px] pl-[10px]">
        <div className="mr-[11px] w-[84px] text-[#c8960a]">
          <button className="block border-b border-dotted border-[#c8960a] text-[17px] leading-[16px] font-bold">0;00;29;14</button>
          <div className="text-center text-[9px] leading-[13px] whitespace-nowrap">00884 (29.97 fps)</div>
        </div>
        <label className="mt-[4px] flex h-[18px] w-[176px] items-center gap-[3px] border border-[#0e0e0e] bg-[#a3a3a3] px-[3px] shadow-[0_1px_0_#777]">
          <Loupe />
          <Down w={7} fill="#e2e2e2" />
          <input aria-label="Search layers" className="min-w-0 flex-1 bg-transparent outline-none" />
        </label>
        <TL label="Mini flowchart" className="ml-[11px] w-[26px]"><Ico w={24} h={13}><path d="M0 1h6v2H0zM0 5h6v2H0zM0 9h6v2H0zM15 4h5v2h-5zM15 7h5v2h-5zM15 1h5v2h-5z" fill={L} /><path d="M6 2l4 4.5h4M6 10l4-3.5M6 6h6" fill="none" stroke={L} strokeWidth="1.3" /><path d="M24 9v4h-4z" fill={L} /></Ico></TL>
        <TL label="Live update" on className="ml-[9px] w-[24px]"><Ico w={18} h={17}><rect x="6" y="6" width="11" height="10" fill="#555" stroke="#b8b8b8" /><rect x="1" y="1" width="11" height="10" fill="#4a4a4a" stroke="#eee" strokeWidth="1.3" /><path d="M3 3l7 6M10 3L3 9M4 6h5M6.5 3v6" stroke="#ddd" /></Ico></TL>
        <TL label="Draft 3D" className="ml-[3px] w-[22px]"><Ico w={20} h={18}><path d="M4.5 0v9M0 4.5h9M1.5 1.5l6 6M7.5 1.5l-6 6" stroke="#ddd" /><path d="M13 5.5l5.5 2.5v6L13 17l-5.5-3V8z" fill="#c2c2c2" /><path d="M7.5 8l5.5 3 5.5-3M13 11v6" stroke="#555" fill="none" /></Ico></TL>
        <TL label="Hide shy layers" className="ml-[12px] w-[20px]"><Ico w={18} h={15}><rect y="8" width="18" height="6" fill="#9c9c9c" /><path d="M3 7q0-6 6-6t6 6h-3.5v2H11v4H7V9h-.5V7z" fill="#dcdcdc" /><path d="M7 5v2M11 5v2" stroke="#444" /></Ico></TL>
        <TL label="Frame blending" className="ml-[6px] w-[20px]"><Ico w={19} h={16}><path d="M.5 5h5v11h-5zM6 3h5v11H6zM12 0h6v12h-6z" fill="#9c9c9c" stroke="#dadada" strokeDasharray="1.5 1" strokeWidth="1.3" /></Ico></TL>
        <TL label="Motion blur" className="ml-[6px] w-[20px]"><Ico w={18} h={17}><circle cx="6" cy="11.5" r="5" fill="#6c6c6c" /><circle cx="8.5" cy="9" r="5" fill="#8a8a8a" /><circle cx="11.5" cy="6" r="5.5" fill="#c0c0c0" /></Ico></TL>
        <TL label="Brainstorm" className="ml-[13px] w-[22px]"><Ico w={19} h={17}><ellipse cx="10.5" cy="6" rx="8" ry="6" fill="#d8d8d8" /><circle cx="5" cy="12" r="2.5" fill="#c8c8c8" /><circle cx="1.5" cy="15" r="1.4" fill="#c8c8c8" /><circle cx="10.5" cy="5.5" r="2.8" fill="#777" /><path d="M9 8h3v3H9z" fill="#666" /></Ico></TL>
        <TL label="Auto-keyframe" className="ml-[6px] w-[18px]"><Ico w={15} h={17}><path d="M1 1l3 4M5 1.5h5M7.5 2v3M12 5l2-2" stroke="#bfbfbf" strokeWidth="1.8" /><circle cx="7.5" cy="10.5" r="5" fill="#6a6a6a" stroke="#b8b8b8" strokeWidth="2" /></Ico></TL>
        <TL label="Graph editor" className="ml-[7px] w-[22px]"><Ico w={19} h={16}><path d="M0 2.5h19M0 12.5h19M3.5 0v16" stroke={L} /><path d="M6 13.5h13M6 15v-1M9 15v-1M12 15v-1M15 15v-1" stroke={L} /><path d="M0 8C4 1 7 3 10 7s5 4 9-1" fill="none" stroke={L} strokeWidth="1.3" /></Ico></TL>
      </div>
      <table className="w-full table-fixed border-collapse text-[#dcdcdc]">
        <colgroup>
          <col className="w-[69px]" /><col className="w-[32px]" /><col className="w-[31px]" /><col className="w-[130px]" />
          <col className="w-[77px]" /><col className="w-[18px]" /><col className="w-[71px]" /><col className="w-[117px]" /><col />
        </colgroup>
        <thead>
          <tr className="h-[16px] border-b border-[#1d1d1d] bg-linear-to-b from-[#6c6c6c] to-[#5c5c5c] text-[10px]">
            <th className="p-0 pl-[5px]"><span className="flex items-center gap-[3px]"><Eye /><Speaker /><Ico w={8} h={8}><circle cx="4" cy="4" r="3.7" fill="#d0d0d0" /></Ico><Ico w={16} h={10}><path d="M7 4V2.5q2-3 4 0V4" fill="none" stroke="#d0d0d0" strokeWidth="1.3" /><path d="M5 4h8v6H5z" fill="#d0d0d0" /><path d="M8.5 6h1v2h-1z" fill="#333" /></Ico></span></th>
            <th className="border-l border-[#3a3a3a] p-0 pl-[11px]"><Ico w={15} h={12}><path d="M0 8L8 1l5 1 1 3-6 7z" fill="#d8d8d8" /><circle cx="11.5" cy="3" r="1" fill="#333" /></Ico></th>
            <th className={th}>#</th>
            <th className={th}>Source Name</th>
            <th className={th}>Mode</th>
            <th className="p-0 pl-[3px] text-left font-normal">T</th>
            <th className="p-0 pl-[3px] text-left font-normal">TrkMat</th>
            <th className={th}>Parent</th>
            <th className="border-l border-[#3a3a3a] p-0" />
          </tr>
        </thead>
        <tbody>
          <tr className="h-[17px] bg-[#636363]">
            <td className="p-0 pl-[5px]"><span className="flex items-center gap-[3px]"><Eye /><Speaker /><span className="flex gap-px"><span className="h-[14px] w-[14px] border border-[#4a4a4a] border-b-[#888]" /><span className="h-[14px] w-[14px] border border-[#4a4a4a] border-b-[#888]" /></span></span></td>
            <td className="p-0 pl-[3px]"><span className="flex items-center gap-[5px]"><Twirl a="shut" /><span className="h-[11px] w-[11px] border border-[#3a3a3a] bg-[#a9c8c6]" /></span></td>
            <td className="p-0 pl-[6px] font-bold">1</td>
            <td className="p-0 pl-[4px]">
              <span className="flex items-center gap-[4px]">
                <Ico w={10} h={13}><path d="M0 0h7l3 3v10H0z" fill="#eee" /><path d="M2 4h6v5H2z" fill="#2a5c9a" /><path d="M3.5 5h3v3h-3z" fill="#bcd" /><path d="M1 11h8" stroke="#222" strokeDasharray="1 1" /></Ico>
                <span className="h-[15px] flex-1 border-2 border-[#cfcfcf] pl-px leading-[11px] font-bold text-[#e4e4e4]">Wildlife.wmv</span>
              </span>
            </td>
            <td className="p-0 pl-[5px]"><Sel value="Normal" label="Blending mode" className="h-[14px] w-[68px]" /></td>
            <td className="p-0"><span className="block h-[14px] w-[14px] border border-[#4a4a4a] border-b-[#888]" /></td>
            <td className="p-0" />
            <td className="p-0 pl-[8px]">
              <span className="flex items-center gap-[5px]">
                <Ico w={11} h={10}><path d="M5.5 5.5q1-1.5-.5-2t-2 1.5 2 3 4-1.5-1-5.5-6 .5-1 7" fill="none" stroke={L} /></Ico>
                <Sel value="None" label="Parent" className="h-[14px] w-[89px]" />
              </span>
            </td>
            <td className="p-0" />
          </tr>
        </tbody>
      </table>
      <div className="flex-1 border-t border-[#4a4a4a]" />
      <div className="flex h-[16px] shrink-0 items-center border-t border-[#4a4a4a] pl-[5px]">
        <button aria-label="Expand layer switches" className="flex"><Ico w={14} h={12}><path d="M.5.5h7v6h-7zM3.5 3h7v6h-7z" fill="#5a5a5a" stroke={L} /><path d="M6 5.5h7v6H6z" fill="#444" stroke={L} /><path d="M8 8l1.5 1.5L12 6.5" stroke="#eee" fill="none" /></Ico></button>
        <button aria-label="Expand transfer controls" className="ml-[3px] flex border border-[#161616] bg-[#444]"><Ico w={14} h={12}><rect x="1" y="2.5" width="12" height="8" fill="none" stroke={L} /><circle cx="6" cy="4.5" r="3.5" fill={L} /><path d="M7 6h5v4H7z" fill="#444" stroke={L} /></Ico></button>
        <button aria-label="Expand in/out" className="ml-[5px] flex"><Ico w={11} h={11}><path d="M3.5 0v3.500L.5 5.5l3 2V11M7.500 0v3.500l3 2-3 2V11" fill="none" stroke={L} strokeWidth="1.6" /></Ico></button>
        <button className="mr-[134px] ml-auto h-[14px] w-[162px] border border-[#262626] bg-linear-to-b from-[#6a6a6a] to-[#525252] text-[10px] leading-[12px] text-[#dedede]">Toggle Switches / Modes</button>
      </div>
    </div>
  );
}

const LABELS = ["0:00s", "02s", "04s", "06s", "08s", "10s", "12s", "14s", "16s", "18s", "20s", "22s", "24s", "26s", "28s", "30s"];

function Handle({ className }: { className?: string }) {
  return <span className={clsx("flex w-[6px] shrink-0 items-center justify-center border border-[#222] bg-[#c8960a]", className)}><i className="h-1/2 w-px bg-[#5a4200]" /></span>;
}

function TimeGraph() {
  return (
    <div className="relative flex min-w-0 flex-1 flex-col border-l border-[#2c2c2c] pt-[5px]">
      <div className="mx-px flex h-[10px] shrink-0">
        <Handle className="rounded-tl-[5px]" />
        <div className="flex-1 border-y border-[#161616] bg-[#8e8e8e]" />
        <Handle className="rounded-tr-[5px]" />
      </div>
      <div className="flex h-[19px] shrink-0 items-end justify-between overflow-hidden px-[7px] text-[10px] text-[#e4e4e4]">
        {LABELS.map((l) => (
          <div key={l} className="flex w-px flex-col items-center">
            <span className="leading-[13px]">{l}</span>
            <span className="h-[4px] w-px bg-[#d0d0d0]" />
          </div>
        ))}
      </div>
      <div className="mx-px flex h-[17px] shrink-0">
        <Handle />
        <div className="flex-1 border-y border-[#161616] bg-[#8e8e8e]" />
        <Handle />
      </div>
      <div className="mx-[7px] flex h-[3px] shrink-0">
        <div className="flex-[867]" />
        <div className="flex-[115] border-l-2 border-[#2323c0] bg-[#1cb81c]" />
        <div className="flex-[18]" />
      </div>
      <div className="h-px shrink-0 bg-black" />
      <div className="h-[17px] shrink-0 bg-[#6a6a6a] px-[7px]">
        <div className="bg-[#161616]">
          <div className="h-[16px] rounded-t-[5px] border-b border-[#5a7472] bg-linear-to-b from-[#bcd0ce] to-[#a3bebb]" />
        </div>
      </div>
      <div className="min-h-0 flex-1 px-[7px]"><div className="h-full bg-[#646464]" /></div>
      <div className="flex h-[17px] shrink-0 items-center pl-[6px]">
        <Ico w={9} h={5}><path d="M0 4.5L4.5 0 9 4.500z" fill={L} /><path d="M3 3.5L4.5 2 6 3.5z" fill="#555" /></Ico>
        <input type="range" aria-label="Timeline zoom" defaultValue={0} className="mx-[11px] h-[9px] w-[50px] appearance-none bg-[linear-gradient(#222,#222)] bg-[length:100%_1px] bg-center bg-no-repeat [&::-webkit-slider-thumb]:h-[8px] [&::-webkit-slider-thumb]:w-[8px] [&::-webkit-slider-thumb]:appearance-none [&::-webkit-slider-thumb]:rounded-t-[3px] [&::-webkit-slider-thumb]:bg-[#bdbdbd]" />
        <Ico w={17} h={7}><path d="M0 7L5 2l3 3 4-5 5 7z" fill={L} /></Ico>
        <div className="ml-[4px] flex h-full flex-1 items-center justify-between border border-[#1d1d1d] bg-[#484848] px-[4px]">
          <Ico w={6} h={9}><path d="M6 0v9L0 4.5z" fill="#7c7c7c" /></Ico>
          <Ico w={6} h={9}><path d="M0 0v9l6-4.5z" fill="#7c7c7c" /></Ico>
        </div>
      </div>
      <div className="pointer-events-none absolute top-[5px] right-[7px] bottom-[17px] left-[7px]">
        <div className="absolute inset-y-0 left-[98.2%] w-px bg-[#f01010]" />
        <svg width="13" height="15" className="absolute top-[14px] left-[98.2%] -ml-[6px]" aria-hidden="true">
          <path d="M1 2q5.5-3 11 0v6.5L6.5 14.5 1 8.5z" fill="#f0b812" stroke="#6a4c00" strokeWidth=".8" />
          <path d="M4.5 3v3.5M6.5 3v3.5M8.5 3v3.5M4 6.5h5M6.5 8v6" stroke="#5a4200" />
        </svg>
      </div>
    </div>
  );
}

function Timeline() {
  return (
    <Panel
      className="h-[337px] shrink-0"
      tabs={
        <>
          <ActiveTab className="w-[81px] gap-[4px] pl-[2px] text-[#e4e4e4]">
            <Grip />
            <span className="h-[11px] w-[11px] bg-[#a59577]" />
            <span className="flex-1">Wildlife</span>
            <span className="pr-[3px]"><Close /></span>
          </ActiveTab>
          <IdleTab className="w-[143px] pr-[8px]">Layer: (none)</IdleTab>
        </>
      }
    >
      <div className="flex min-h-0 flex-1">
        <LayerList />
        <TimeGraph />
        <div className="flex w-[17px] shrink-0 flex-col items-center">
          <div className="mt-[35px] flex h-[19px] w-full justify-center border-b border-[#1d1d1d]"><Ico w={12} h={15}><path d="M.5.5h11v9L6 14.5.5 9.5z" fill="#a8a8a8" stroke="#ddd" /></Ico></div>
          <div className="flex h-[18px] items-center"><Ico w={14} h={13}><circle cx="6" cy="5.5" r="4.5" fill="#777" stroke="#c4c4c4" /><path d="M7 4h6v6H7z" fill="#5a5a5a" stroke="#c4c4c4" /><path d="M0 12.5L4.5 5 9 12.5z" fill="#e2e2e2" /></Ico></div>
          <ScrollV className="w-full flex-1" />
          <div className="h-[17px]" />
        </div>
      </div>
    </Panel>
  );
}

/* ---------- taskbar ---------- */

function TaskBtn({ label, run, on, children }: { label: string; run?: boolean; on?: boolean; children: React.ReactNode }) {
  return (
    <button
      aria-label={label}
      className={clsx(
        "flex h-[28px] w-[42px] shrink-0 items-center justify-center rounded-[3px]",
        run && "border border-[#d2eafa] shadow-[0_0_0_1px_#1d4f78]",
        run && (on ? "bg-linear-to-br from-[#dbeaf6] to-[#8bbbe0]" : "bg-linear-to-br from-[#a9d4ee] via-[#5aa9da] to-[#4a9dd4]"),
      )}
    >
      {children}
    </button>
  );
}

function App16({ t, className }: { t: string; className: string }) {
  return <span className={clsx("flex h-[16px] w-[16px] items-center justify-center border-l-2 text-[9px] font-bold", className)}>{t}</span>;
}

function TaskBar() {
  return (
    <footer className="relative z-10 flex h-[30px] shrink-0 items-center border-t border-[#6fa8d4] bg-[linear-gradient(90deg,#14518c_0%,#1f669f_4%,#2f86c0_7%,#3d97d2_12%,#2c88cd_20%,#3f98dc_34%,#2f83cc_46%,#2877c2_60%,#2168b2_71%,#1f67b4_88%,#174a84_91%,#153f74_100%)] pl-[9px]">
      <svg width="60" height="29" className="absolute top-0 left-[1214px] blur-[1px]" aria-hidden="true">
        <path d="M4 0H22Q40 12 49 29H34Q24 12 4 0z" fill="#a9d2f5" />
      </svg>
      <button aria-label="Start" className="-mt-[5px] flex shrink-0 self-start">
        <Ico w={36} h={36}>
          <defs>
            <radialGradient id="orb" cx=".5" cy=".9" r=".9"><stop offset="0" stopColor="#35d5ff" /><stop offset=".45" stopColor="#1c5e97" /><stop offset="1" stopColor="#a8c8de" /></radialGradient>
          </defs>
          <circle cx="18" cy="17.5" r="17" fill="url(#orb)" stroke="#173a5c" />
          <path d="M11 9q4-3 8-.5L17.5 16q-4-2-8 .5z" fill="#e8562c" />
          <path d="M20 9q3.500 2 8-.5L26.5 16q-4 2.500-8 .5z" fill="#8cc63e" />
          <path d="M9 18q4-3 8-.5L15.5 25q-4-2-8 .5z" fill="#3fa9e8" />
          <path d="M18 18q3.500 2 8-.5L24.5 25q-4 2.500-8 .5z" fill="#ffc52e" />
        </Ico>
      </button>
      <div className="mr-[9px] ml-[14px]"><Ico w={8} h={21}>{[0, 4, 8, 12, 16, 20].map((y) => [0, 3, 6].map((x) => <rect key={`${x}-${y}`} x={x} y={y} width="2" height="1" fill="#0c3358" />))}</Ico></div>
      <div className="flex gap-[4px]">
        <TaskBtn label="Firefox"><Ico w={17} h={17}><circle cx="8.5" cy="8.5" r="8" fill="#e8701a" /><circle cx="9" cy="6.5" r="5" fill="#2b4f9c" /><path d="M1 4q2 3 6 3l2 2q-1 3-4 2 4 4 9 0 2-3 1-7 3 6-1 10.5-6 4-11-1Q-.5 9 1 4z" fill="#ffb02e" /></Ico></TaskBtn>
        <TaskBtn label="Explorer" run><Ico w={17} h={16}><path d="M1 2h6l1 2h8v9H1z" fill="#f2d675" stroke="#b8923a" strokeWidth=".6" /><path d="M2 5.5h13V9H2z" fill="#fff3bd" /><path d="M3 9h11v3H3z" fill="#6db7e4" /><path d="M4 15V11.5h9V15" stroke="#cfe8f6" strokeWidth="1.8" fill="none" /></Ico></TaskBtn>
        <TaskBtn label="Internet Explorer"><Ico w={18} h={17}><path d="M14 11.5A5.5 5.5 0 1 1 14.5 8.5H5" fill="none" stroke="#0b4f9a" strokeWidth="4" /><path d="M14 11.5A5.5 5.5 0 1 1 14.5 8.5H5" fill="none" stroke="#7fd0f8" strokeWidth="2.6" /><path d="M1.5 15.5Q-1 12 6 5.5T17 2" fill="none" stroke="#f5c430" strokeWidth="1.6" /></Ico></TaskBtn>
        <TaskBtn label="Premiere"><App16 t="Pr" className="border-[#5e3864] bg-[#9a6b9e] text-[#f2dff2]" /></TaskBtn>
        <TaskBtn label="Media Player"><Ico w={14} h={16}><rect x=".5" y="1" width="13" height="14" fill="#cfe4f2" stroke="#7fa8c6" /><circle cx="7" cy="8" r="5.5" fill="#f08a1c" /><path d="M5.3 5L10 8l-4.7 3z" fill="#fff" /></Ico></TaskBtn>
        <TaskBtn label="Illustrator" run><App16 t="Ai" className="border-[#8a4a00] bg-[#e08a10] text-[#4a2600]" /></TaskBtn>
        <TaskBtn label="Chrome" run><Ico w={16} h={16}><circle cx="8" cy="8" r="7.5" fill="#f6cf3a" /><path d="M8 8L1.5 4.2A7.5 7.5 0 0 1 14.5 4.2z" fill="#dd3b2c" /><path d="M8 8L1.5 4.2A7.5 7.5 0 0 0 7.5 15.5z" fill="#35a34a" /><circle cx="8" cy="8" r="3.8" fill="#fff" /><circle cx="8" cy="8" r="2.9" fill="#3f7fd8" /></Ico></TaskBtn>
        <TaskBtn label="Photoshop" run><App16 t="Ps" className="border-[#04325c] bg-[#0a5f9e] text-[#9fe0ff]" /></TaskBtn>
        <TaskBtn label="After Effects" run on><App16 t="AE" className="border-[#3a3a5c] bg-[#62627f] text-[#dcdcf2]" /></TaskBtn>
        <TaskBtn label="Paint" run><Ico w={16} h={16}><path d="M1 9q0-6 6.5-6T14 8t-4 3-2 4Q1 15 1 9z" fill="#e6eef4" /><circle cx="4" cy="8" r="1.3" fill="#d33" /><circle cx="7" cy="5.5" r="1.3" fill="#3a3" /><circle cx="10.5" cy="7" r="1.3" fill="#36c" /><circle cx="5" cy="11.5" r="1.3" fill="#e90" /><path d="M13 0l1.5 9v6h-2V9z" fill="#e07a1c" /></Ico></TaskBtn>
      </div>
      <div className="flex-1" />
      <Ico w={8} h={21}>{[0, 4, 8, 12, 16, 20].map((y) => [0, 3, 6].map((x) => <rect key={`${x}-${y}`} x={x} y={y} width="2" height="1" fill="#0a2644" />))}</Ico>
      <Ico w={15} h={14} className="ml-[10px]"><path d="M2 4q3-3 6-2t6-2" fill="none" stroke="#d8d8d8" /><rect y="6" width="15" height="8" rx="1" fill="#e2e2e2" /><path d="M2 8.5h11M2 10.5h11M4 12.5h7" stroke="#666" strokeDasharray="1 1" /></Ico>
      <Ico w={8} h={5} className="ml-[18px]"><path d="M0 4.5h8L4 0z" fill="#fff" /></Ico>
      <Ico w={15} h={15} className="ml-[14px]"><path d="M1.5 0v15" stroke="#fff" strokeWidth="1.5" /><path d="M3 1.5h5l1 1.5h5l-1.5 2.5L13 8H9L8 6.5H3z" fill="#fff" /></Ico>
      <Ico w={16} h={14} className="ml-[9px]"><rect x="5" y="3" width="10" height="7.5" fill="#23507e" stroke="#fff" strokeWidth="1.5" /><path d="M7 13h6M2.5 1v3M5 0v4M1 4h5v3H1zM3.5 7v6H6" stroke="#fff" strokeWidth="1.3" fill="none" /></Ico>
      <Ico w={12} h={14} className="ml-[11px]"><path d="M0 4.5h3L7 0v14L3 9.5H0z" fill="#fff" /><path d="M9 4q2 3 0 6" fill="none" stroke="#fff" strokeWidth="1.3" /></Ico>
      <time className="mr-[14px] ml-[23px] w-[52px] text-[12px] whitespace-nowrap text-white">12:39 PM</time>
      <button aria-label="Show desktop" className="h-full w-[22px] border border-[#7fa3c6] bg-linear-to-b from-[#5e85ab] to-[#163c68]" />
    </footer>
  );
}

export default function App() {
  return (
    <div className="flex h-screen flex-col overflow-hidden bg-[#232323] font-['Noto_Sans',sans-serif] text-[11px] leading-[14px]">
      <TitleBar />
      <MenuBar />
      <ToolBar />
      <main className="flex min-h-0 flex-1 gap-[4px] px-px pt-[2px] pb-[2px]">
        <div className="flex min-w-0 flex-1 flex-col gap-[4px]">
          <div className="flex min-h-0 flex-1 gap-[4px]">
            <EffectControls />
            <Composition />
          </div>
          <Timeline />
        </div>
        <aside className="flex w-[206px] shrink-0 flex-col">
          <Info />
          <div className="h-[4px] shrink-0" />
          <Preview />
          <div className="mt-[4px] mr-[19px] mb-[3px] h-[5px] shrink-0 border border-black bg-[#6c6c6c]" />
          <Effects />
          <div className="h-[4px] shrink-0" />
          <Paragraph />
        </aside>
      </main>
      <TaskBar />
    </div>
  );
}
